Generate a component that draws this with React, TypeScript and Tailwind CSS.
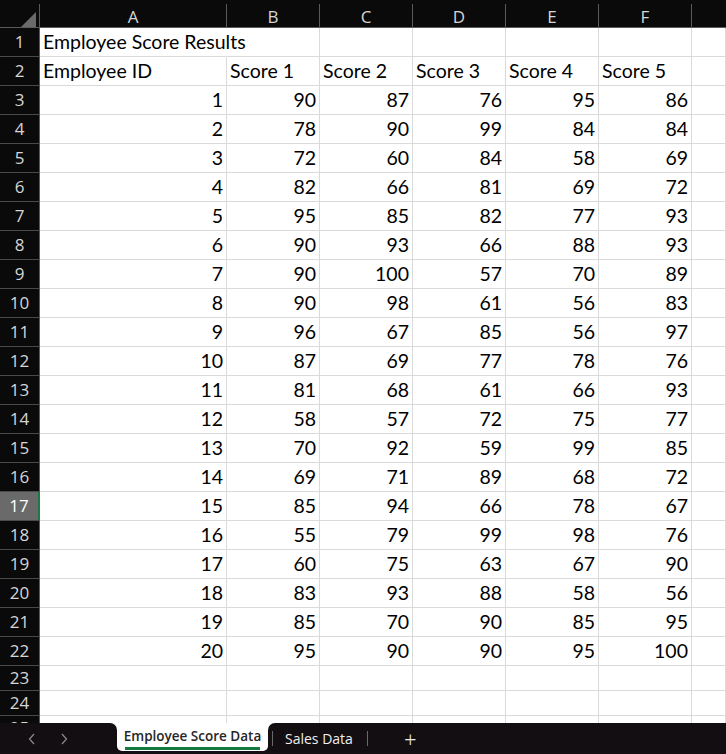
import React from 'react';

// Sheet data: [id, s1, s2, s3, s4, s5]
const SCORES: number[][] = [
  [1, 90, 87, 76, 95, 86],
  [2, 78, 90, 99, 84, 84],
  [3, 72, 60, 84, 58, 69],
  [4, 82, 66, 81, 69, 72],
  [5, 95, 85, 82, 77, 93],
  [6, 90, 93, 66, 88, 93],
  [7, 90, 100, 57, 70, 89],
  [8, 90, 98, 61, 56, 83],
  [9, 96, 67, 85, 56, 97],
  [10, 87, 69, 77, 78, 76],
  [11, 81, 68, 61, 66, 93],
  [12, 58, 57, 72, 75, 77],
  [13, 70, 92, 59, 99, 85],
  [14, 69, 71, 89, 68, 72],
  [15, 85, 94, 66, 78, 67],
  [16, 55, 79, 99, 98, 76],
  [17, 60, 75, 63, 67, 90],
  [18, 83, 93, 88, 58, 56],
  [19, 85, 70, 90, 85, 95],
  [20, 95, 90, 90, 95, 100],
];

const COLS = ['A', 'B', 'C', 'D', 'E', 'F', ''];
const GRID = 'grid grid-cols-[40px_187px_93px_93px_93px_93px_93px_1fr]';
const CELL_FONT = "font-['Lato',sans-serif]";
const UI_FONT = "font-['Open_Sans',sans-serif]";

type CellValue = string | number | null;

function RowHeader({ n, selected, tall }: { n: number; selected?: boolean; tall: boolean }) {
  return (
    <div
      className={`${tall ? 'h-[29px]' : 'h-[25px]'} flex items-center justify-center border-b border-[#4a4a4a] text-[17px] ${UI_FONT} ${
        selected
          ? 'bg-[#6a6a6a] text-white border-r-2 border-r-[#1e7a45]'
          : 'bg-[#0a0a0a] text-[#d6d6d6] border-r border-r-[#5a5a5a]'
      }`}
    >
      {n}
    </div>
  );
}

function Cell({ value, tall, overflow }: { value: CellValue; tall: boolean; overflow?: boolean }) {
  const numeric = typeof value === 'number';
  return (
    <div
      className={`${tall ? 'h-[29px]' : 'h-[25px]'} flex items-end pb-[2px] border-r border-b border-[#dadada] bg-white text-[19.5px] leading-[24px] text-black ${CELL_FONT} ${
        numeric ? 'justify-end pr-[3px]' : 'pl-[3px]'
      } ${overflow ? 'border-r-white relative z-10 whitespace-nowrap' : 'overflow-hidden whitespace-nowrap'}`}
    >
      {value !== null && <span>{value}</span>}
    </div>
  );
}

function SheetRow({ n, cells, tall = true }: { n: number; cells: CellValue[]; tall?: boolean }) {
  return (
    <div className={`${GRID} shrink-0`}>
      <RowHeader n={n} selected={n === 17} tall={tall} />
      {cells.map((v, i) => (
        <Cell key={i} value={v} tall={tall} overflow={n === 1 && i === 0} />
      ))}
    </div>
  );
}

function Chevron({ dir }: { dir: 'left' | 'right' }) {
  return (
    <svg width="8" height="12" viewBox="0 0 8 12" fill="none" stroke="#8c8c8c" strokeWidth="1.2">
      {dir === 'left' ? <path d="M6 1 L1.5 6 L6 11" /> : <path d="M2 1 L6.5 6 L2 11" />}
    </svg>
  );
}

function TabBar() {
  return (
    <div className="flex h-[31px] shrink-0 bg-white">
      <div className="w-[117px] bg-[#130e12] rounded-tr-[7px] flex items-center pl-[28px] gap-[24px] pt-[1px]">
        <Chevron dir="left" />
        <Chevron dir="right" />
      </div>
      <div className="w-[151px] bg-[#130e12]">
        <div className="h-[28px] bg-white rounded-b-[5px] flex flex-col items-center justify-center pt-[6px]">
          <span className={`text-[13.5px] font-semibold text-[#262626] ${UI_FONT} leading-none`}>
            Employee Score Data
          </span>
          <div className="mt-[4px] h-[3px] w-[135px] bg-[#137a3f]" />
        </div>
      </div>
      <div className="flex-1 bg-[#130e12] rounded-tl-[7px] flex items-center">
        <div className="w-px h-[15px] bg-[#6a6a6a] ml-[4px]" />
        <span className={`text-[14px] text-[#f0f0f0] ${UI_FONT} ml-[12px] leading-none`}>Sales Data</span>
        <div className="w-px h-[15px] bg-[#6a6a6a] ml-[14px]" />
        <span className="ml-[36px] text-[#e8e8e8] text-[22px] font-light leading-none">+</span>
      </div>
    </div>
  );
}

export default function App() {
  const rows: CellValue[][] = [
    ['Employee Score Results', null, null, null, null, null, null],
    ['Employee ID', 'Score 1', 'Score 2', 'Score 3', 'Score 4', 'Score 5', null],
    ...SCORES.map((r) => [...r, null]),
  ];

  return (
    <div className="w-[726px] h-[754px] overflow-hidden bg-white flex flex-col">
      <div className="h-[723px] shrink-0 overflow-hidden">
        {/* Column headers */}
        <div className="h-[4px] bg-[#0a0a0a]" />
        <div className={`${GRID} h-[24px] bg-[#0a0a0a] border-b border-[#5a5a5a]`}>
          <div className="flex items-end justify-end pr-[3px] pb-[3px] border-r border-[#5a5a5a]">
            <svg width="15" height="15" viewBox="0 0 15 15">
              <path d="M15 0 L15 15 L0 15 Z" fill="#6a6a6a" />
            </svg>
          </div>
          {COLS.map((c, i) => (
            <div
              key={i}
              className={`flex items-center justify-center text-[17px] text-[#d6d6d6] ${UI_FONT} ${
                i < COLS.length - 1 ? 'border-r border-[#5a5a5a]' : ''
              }`}
            >
              {c}
            </div>
          ))}
        </div>

        {/* Sheet body */}
        {rows.map((cells, i) => (
          <SheetRow key={i} n={i + 1} cells={cells} />
        ))}
        {[23, 24, 25].map((n) => (
          <SheetRow key={n} n={n} cells={[null, null, null, null, null, null, null]} tall={false} />
        ))}
      </div>
      <TabBar />
    </div>
  );
}
